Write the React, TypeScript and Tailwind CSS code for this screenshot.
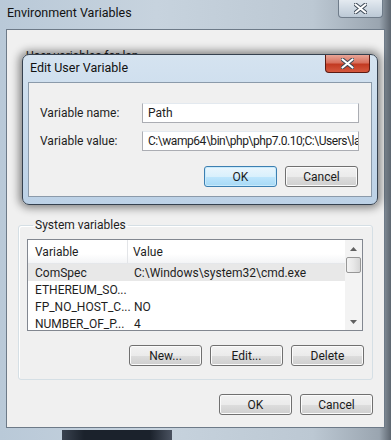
import React from "react";

const font = { fontFamily: 'Roboto, "Noto Sans", sans-serif' };

function CloseGlyph({ className }: { className?: string }) {
  return (
    <svg width="13" height="11" viewBox="0 0 13 11" className={className}>
      <path
        d="M1.5 1.5 L11.5 9.5 M11.5 1.5 L1.5 9.5"
        stroke="#3a4654"
        strokeWidth="4"
        strokeLinecap="round"
      />
      <path
        d="M1.5 1.5 L11.5 9.5 M11.5 1.5 L1.5 9.5"
        stroke="#ffffff"
        strokeWidth="2.2"
        strokeLinecap="round"
      />
    </svg>
  );
}

function WinButton({ label, primary }: { label: string; primary?: boolean }) {
  return (
    <div
      className={[
        "flex h-[21px] w-[73px] items-center justify-center rounded-[3px] border text-[12px] text-[#1b1b1b]",
        primary
          ? "border-[#3c7fb1] bg-[linear-gradient(180deg,#eaf6fd_0%,#d9f0fc_50%,#bee6fd_51%,#a7d9f5_100%)] shadow-[inset_0_0_0_1px_#c9eafb]"
          : "border-[#707070] bg-[linear-gradient(180deg,#f2f2f2_0%,#ebebeb_50%,#dddddd_51%,#cfcfcf_100%)] shadow-[inset_0_0_0_1px_#fbfbfb]",
      ].join(" ")}
    >
      {label}
    </div>
  );
}

const rows = [
  { name: "ComSpec", value: "C:\\Windows\\system32\\cmd.exe", selected: true },
  { name: "ETHEREUM_SO...", value: "" },
  { name: "FP_NO_HOST_C...", value: "NO" },
  { name: "NUMBER_OF_P...", value: "4" },
];

function EditDialog() {
  return (
    <div className="absolute left-[22px] top-[54px] flex h-[151px] w-[356px] flex-col rounded-[7px] border border-[#35414f] bg-[linear-gradient(180deg,#d5e3f0_0%,#c9dbec_40%,#bcd1e6_100%)] shadow-[0_0_9px_3px_rgba(0,0,0,0.45)]">
      <div className="flex h-[27px] items-center pl-[7px] text-[12.5px] text-[#111]">
        Edit User Variable
      </div>
      <div className="absolute right-[7px] top-0 flex h-[18px] w-[45px] items-center justify-center rounded-b-[4px] border border-t-0 border-[#5c1a12] bg-[linear-gradient(180deg,#e8a597_0%,#d8705d_45%,#c23a22_55%,#d5583e_100%)]">
        <CloseGlyph />
      </div>
      <div className="mx-[5px] mb-[7px] flex flex-1 flex-col border border-[#8b9aaa] bg-[#f0f0f0] px-[11px] pt-[20px]">
        <div className="flex h-[20px] items-center">
          <span className="w-[102px] text-[12px] text-[#1e1e1e]">Variable name:</span>
          <div className="flex h-[20px] w-[217px] items-center border border-[#abadb3] border-t-[#e3e9ef] bg-white pl-[5px] text-[12px] text-[#1e1e1e]">
            Path
          </div>
        </div>
        <div className="mt-[8px] flex h-[20px] items-center">
          <span className="w-[102px] text-[12px] text-[#1e1e1e]">Variable value:</span>
          <div className="flex h-[20px] w-[217px] items-center overflow-hidden whitespace-nowrap border border-[#abadb3] border-t-[#e3e9ef] bg-white pl-[5px] text-[12px] tracking-[-0.45px] text-[#1e1e1e]">
            C:\wamp64\bin\php\php7.0.10;C:\Users\lap
          </div>
        </div>
        <div className="mr-[2px] mt-[15px] flex justify-end gap-[8px]">
          <WinButton label="OK" primary />
          <WinButton label="Cancel" />
        </div>
      </div>
    </div>
  );
}

export default function App() {
  return (
    <div
      className="relative h-[440px] w-[391px] overflow-hidden bg-[linear-gradient(90deg,#b9c9d8_0%,#c7d3de_40%,#bcc8d3_80%,#9aa5b0_97%,#5d6670_100%)]"
      style={font}
    >
      <div className="flex h-[29px] items-start justify-between pl-[7px] pr-[8px]">
        <span className="mt-[4px] text-[12.5px] text-[#121212]">Environment Variables</span>
        <div className="flex h-[18px] w-[45px] items-center justify-center rounded-b-[4px] border border-t-0 border-[#6f7c8a] bg-[linear-gradient(180deg,#e4eaf0_0%,#cfd9e3_50%,#bcc9d6_100%)]">
          <CloseGlyph />
        </div>
      </div>

      <div className="mx-[6px] flex h-[399px] flex-col border border-[#6d7a88] bg-[#f0f0f0]">
        <div className="ml-[19px] mt-[19px] h-[14px] text-[12px] leading-[14px] text-[#1e1e1e]">
          User variables for lap
        </div>

        <fieldset className="mx-[11px] mt-[155px] h-[162px] rounded-[3px] border border-[#d5dfe5] px-[8px] pb-[13px] shadow-[inset_1px_1px_0_#ffffff]">
          <legend className="ml-[6px] px-[2px] text-[12px] leading-[14px] text-[#1e1e1e]">
            System variables
          </legend>
          <div className="mt-[7px] flex h-[92px] w-[336px] overflow-hidden border border-[#828790] bg-white">
            <div className="flex flex-1 flex-col">
              <div className="flex h-[24px] shrink-0 border-b border-[#e5e7ea] bg-[linear-gradient(180deg,#ffffff_0%,#ffffff_60%,#f3f4f6_100%)] text-[12px] text-[#1e1e1e]">
                <div className="flex w-[100px] items-center border-r border-[#e3e5e8] pl-[7px]">Variable</div>
                <div className="flex items-center pl-[5px]">Value</div>
              </div>
              {rows.map((r) => (
                <div
                  key={r.name}
                  className={[
                    "flex h-[17px] shrink-0 items-center text-[12px] text-[#1e1e1e]",
                    r.selected ? "bg-[#e8e8e8]" : "",
                  ].join(" ")}
                >
                  <div className="w-[100px] whitespace-nowrap pl-[7px]">{r.name}</div>
                  <div className="whitespace-nowrap pl-[6px]">{r.value}</div>
                </div>
              ))}
            </div>
            <div className="flex w-[17px] flex-col items-center bg-[#f3f3f3]">
              <div className="flex h-[17px] w-full items-center justify-center">
                <svg width="7" height="4" viewBox="0 0 7 4">
                  <path d="M0 4 L3.5 0 L7 4 Z" fill="#606060" />
                </svg>
              </div>
              <div className="h-[16px] w-[15px] rounded-[2px] border border-[#979797] bg-[linear-gradient(90deg,#f3f3f3,#e8e8e8_50%,#d6d6d6)]" />
              <div className="flex-1" />
              <div className="flex h-[17px] w-full items-center justify-center">
                <svg width="7" height="4" viewBox="0 0 7 4">
                  <path d="M0 0 L7 0 L3.5 4 Z" fill="#606060" />
                </svg>
              </div>
            </div>
          </div>
          <div className="mt-[14px] flex justify-end gap-[8px]">
            <WinButton label="New..." />
            <WinButton label="Edit..." />
            <WinButton label="Delete" />
          </div>
        </fieldset>

        <div className="mr-[11px] mt-[14px] flex justify-end gap-[8px]">
          <WinButton label="OK" />
          <WinButton label="Cancel" />
        </div>
      </div>

      <div className="flex h-[12px]">
        <div className="ml-[62px] mt-[2px] h-[10px] w-[110px] bg-[linear-gradient(90deg,#3a4350,#1b222c_20%,#1b222c_80%,#4a5260)]" />
      </div>

      <EditDialog />
    </div>
  );
}
